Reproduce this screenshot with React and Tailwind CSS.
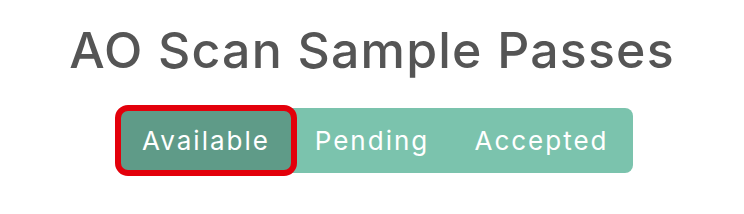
import React, { useState } from "react";

const tabs = [
    { name: "Available", width: "w-[176px]" },
    { name: "Pending", width: "w-[156px]" },
    { name: "Accepted", width: "w-[183px]" },
];

export default function App() {
    const [active, setActive] = useState("Available");

    return (
        <div className="w-[744px] h-[214px] bg-white flex flex-col items-center font-['Inter',sans-serif]">
            <h1 className="mt-[25px] text-[50px] leading-[50px] text-[#555555] font-medium tracking-[1.2px]">
                AO Scan Sample Passes
            </h1>
            {/* tab bar */}
            <div className="mt-[33px] ml-[7px] flex h-[65px] rounded-lg bg-[#7bc3ad]">
                {tabs.map((tab) => (
                    <button
                        key={tab.name}
                        onClick={() => setActive(tab.name)}
                        className={
                            tab.name === active
                                ? `${tab.width} rounded-[10px] bg-[#5f9b88] text-white text-[26px] tracking-[2px] outline-[6px] outline-solid outline-[#e3000b] -outline-offset-[3px]`
                                : `${tab.width} text-white text-[26px] tracking-[2px]`
                        }
                    >
                        {tab.name}
                    </button>
                ))}
            </div>
        </div>
    );
}
